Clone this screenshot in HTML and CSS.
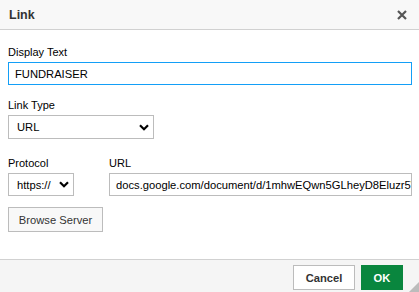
FILE: index.html
```html
<!DOCTYPE html>
<html>
<head>
<meta charset="utf-8">
<link rel="stylesheet" href="styles.css">
</head>
<body>
<div class="dialog">
  <div class="header">
    <span class="title">Link</span>
    <svg class="close" width="10" height="10" viewBox="0 0 10 10"><path d="M1 1L9 9M9 1L1 9" stroke="#555" stroke-width="2.2"/></svg>
  </div>
  <div class="body">
    <div class="field">
      <div class="label">Display Text</div>
      <div class="input focus">FUNDRAISER</div>
    </div>
    <div class="field">
      <div class="label">Link Type</div>
      <div class="select type"><span>URL</span><svg width="10" height="7" viewBox="0 0 10 7"><path d="M1 1.2L5 5.2L9 1.2" fill="none" stroke="#000" stroke-width="2.2"/></svg></div>
    </div>
    <div class="row">
      <div class="field proto">
        <div class="label">Protocol</div>
        <div class="select protocol"><span>https://</span><svg width="10" height="7" viewBox="0 0 10 7"><path d="M1 1.2L5 5.2L9 1.2" fill="none" stroke="#000" stroke-width="2.2"/></svg></div>
      </div>
      <div class="field url">
        <div class="label">URL</div>
        <div class="input clip">docs.google.com/document/d/1mhwEQwn5GLheyD8Eluzr5W</div>
      </div>
    </div>
    <div class="browse">Browse Server</div>
  </div>
  <div class="footer">
    <div class="btn cancel">Cancel</div>
    <div class="btn ok">OK</div>
    <div class="grip"></div>
  </div>
</div>
</body>
</html>
```
FILE: styles.css
```css
html, body {
  margin: 0;
  padding: 0;
  background: #fff;
}
body {
  font-family: "Liberation Sans", Arial, sans-serif;
  font-size: 11.2px;
  color: #000;
}
.dialog {
  width: 419px;
  height: 292px;
  display: flex;
  flex-direction: column;
  position: relative;
  overflow: hidden;
}
.header {
  height: 30px;
  box-sizing: border-box;
  background: #f8f8f8;
  border-bottom: 1px solid #d1d1d1;
  display: flex;
  align-items: center;
  justify-content: space-between;
  padding: 0 12px 0 9px;
}
.title {
  font-weight: bold;
  font-size: 12.5px;
  color: #333;
}
.body {
  flex: 1;
  padding: 15px 7px 0 8px;
  min-width: 0;
}
.field {
  display: flex;
  flex-direction: column;
  min-width: 0;
}
.label {
  font-size: 11px;
  line-height: 14px;
  color: #000;
  margin-bottom: 3px;
}
.input {
  height: 23px;
  box-sizing: border-box;
  border: 1px solid #bcbcbc;
  padding: 0 6px;
  display: flex;
  align-items: center;
  white-space: nowrap;
  overflow: hidden;
  min-width: 0;
}
.input.focus {
  border-color: #139ff7;
  margin-bottom: 13px;
}
.select {
  height: 24px;
  box-sizing: border-box;
  border: 1px solid #bcbcbc;
  display: flex;
  align-items: center;
  justify-content: space-between;
  padding: 0 4px 0 8px;
}
.select.type {
  width: 146px;
  margin-bottom: 17px;
}
.select.protocol {
  width: 66px;
  height: 23px;
}
.row {
  display: flex;
  gap: 35px;
}
.url {
  flex: 1;
}
.browse {
  margin-top: 11px;
  width: 95px;
  height: 25px;
  box-sizing: border-box;
  border: 1px solid #bcbcbc;
  background: #f8f8f8;
  display: flex;
  align-items: center;
  justify-content: center;
  color: #333;
}
.footer {
  height: 33px;
  box-sizing: border-box;
  border-top: 1px solid #d1d1d1;
  background: #f5f5f5;
  display: flex;
  justify-content: flex-end;
  align-items: flex-start;
  padding: 5px 16px 0 0;
  gap: 6px;
}
.btn {
  height: 25px;
  box-sizing: border-box;
  display: flex;
  align-items: center;
  justify-content: center;
  font-weight: bold;
  font-size: 11.2px;
}
.cancel {
  width: 62px;
  border: 1px solid #bcbcbc;
  background: #fff;
  color: #333;
}
.ok {
  width: 42px;
  border: 1px solid #09863e;
  background: #09863e;
  color: #fff;
}
.grip {
  position: absolute;
  right: 0;
  bottom: 0;
  width: 0;
  height: 0;
  border-style: solid;
  border-width: 0 0 10px 10px;
  border-color: transparent transparent #bcbcbc transparent;
}
```
